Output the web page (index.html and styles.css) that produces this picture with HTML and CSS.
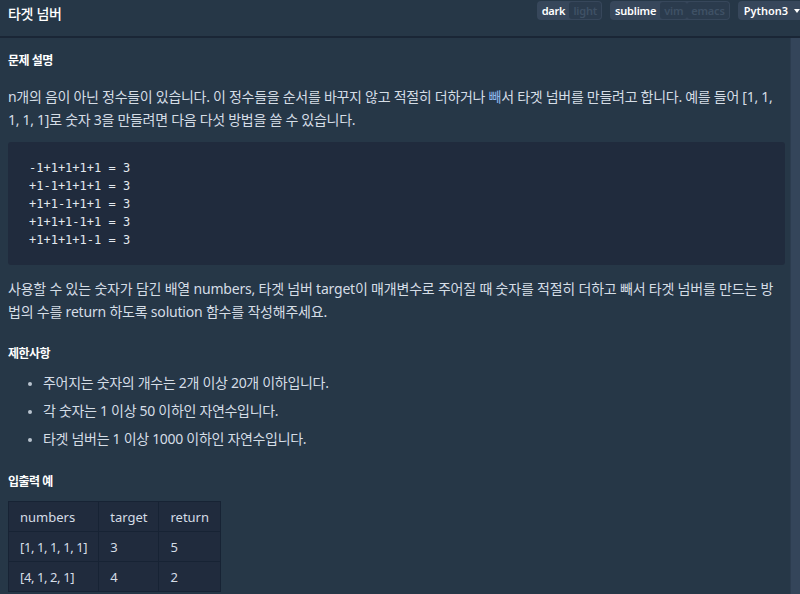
FILE: index.html
```html
<!DOCTYPE html>
<html>
<head>
  <meta charset="utf-8">
  <title>타겟 넘버</title>
  <link rel="stylesheet" href="styles.css">
</head>
<body>
  <div class="topbar">
    <h1>타겟 넘버</h1>
    <div class="tools">
      <div class="toggle">
        <span class="opt on">dark</span><span class="opt">light</span>
      </div>
      <div class="toggle">
        <span class="opt on">sublime</span><span class="opt">vim</span><span class="opt">emacs</span>
      </div>
      <div class="lang">Python3<span class="caret"></span></div>
    </div>
  </div>

  <div class="page">
    <div class="guide">
      <h4>문제 설명</h4>
      <p class="first">n개의 음이 아닌 정수들이 있습니다. 이 정수들을 순서를 바꾸지 않고 적절히 더하거나 <span class="odd">빼</span>서 타겟 넘버를 만들려고 합니다. 예를 들어 [1, 1, 1, 1, 1]로 숫자 3을 만들려면 다음 다섯 방법을 쓸 수 있습니다.</p>
<pre>-1+1+1+1+1 = 3
+1-1+1+1+1 = 3
+1+1-1+1+1 = 3
+1+1+1-1+1 = 3
+1+1+1+1-1 = 3</pre>
      <p class="second">사용할 수 있는 숫자가 담긴 배열 numbers, 타겟 넘버 target이 매개변수로 주어질 때 숫자를 적절히 더하고 빼서 타겟 넘버를 만드는 방법의 수를 return 하도록 solution 함수를 작성해주세요.</p>

      <h5>제한사항</h5>
      <ul>
        <li>주어지는 숫자의 개수는 2개 이상 20개 이하입니다.</li>
        <li>각 숫자는 1 이상 50 이하인 자연수입니다.</li>
        <li>타겟 넘버는 1 이상 1000 이하인 자연수입니다.</li>
      </ul>

      <h5 class="io">입출력 예</h5>
      <table>
        <tr><th>numbers</th><th>target</th><th>return</th></tr>
        <tr><td>[1, 1, 1, 1, 1]</td><td>3</td><td>5</td></tr>
        <tr><td>[4, 1, 2, 1]</td><td>4</td><td>2</td></tr>
      </table>
    </div>
    <div class="scrollbar"></div>
  </div>
</body>
</html>
```

FILE: styles.css
```css
body {
  margin: 0;
  background-color: #263747;
  color: #d5dde6;
  font-family: "Noto Sans", "Noto Sans CJK KR", sans-serif;
  overflow: hidden;
}

.topbar {
  display: flex;
  justify-content: space-between;
  height: 36px;
  border-bottom: 2px solid #1a2636;
}

.topbar h1 {
  margin: 0;
  padding: 3px 0 0 8px;
  font-size: 14px;
  letter-spacing: -0.3px;
  line-height: 22px;
  font-weight: 500;
  color: #ffffff;
}

.tools {
  display: flex;
  align-items: flex-start;
  gap: 8px;
  padding-top: 1px;
  margin-right: -12px;
}

.toggle {
  display: flex;
  background-color: #37475b;
  border-radius: 4px;
  padding: 1px;
}

.opt {
  font-size: 11px;
  font-weight: 600;
  letter-spacing: -0.2px;
  line-height: 17px;
  padding: 0 4px;
  color: #3f5165;
  background-color: #2b3b4d;
  border-radius: 3px;
}

.opt.on {
  color: #ffffff;
  background-color: transparent;
}

.lang {
  display: flex;
  align-items: center;
  white-space: nowrap;
  font-size: 11px;
  font-weight: 600;
  line-height: 19px;
  color: #ffffff;
  background-color: #37475b;
  border-radius: 4px;
  padding: 0 12px 0 6px;
}

.caret {
  border-left: 3.5px solid transparent;
  border-right: 3.5px solid transparent;
  border-top: 4px solid #ffffff;
  margin-left: 6px;
}

.page {
  display: flex;
}

.guide {
  flex: 1;
  padding: 0 5px 0 8px;
}

.scrollbar {
  width: 9px;
  height: 560px;
  background-color: #34455a;
  border-left: 1px solid #2c3c4f;
}

h4, h5 {
  margin: 13px 0 0;
  font-size: 12px;
  letter-spacing: -0.5px;
  font-weight: 700;
  color: #ffffff;
  line-height: 20px;
}

h5 {
  margin-top: 21px;
}

h5.io {
  margin-top: 19px;
}

p {
  margin: 12px 0 0;
  font-size: 14px;
  letter-spacing: -0.28px;
  line-height: 23px;
}

p.first {
  margin-top: 14px;
}

p.second {
  letter-spacing: -0.2px;
}

.odd {
  color: #8fb8ee;
}

pre {
  margin: 11px 0 0;
  padding: 17px 21px 16px;
  background-color: #202b3d;
  border-radius: 3px;
  font-family: "DejaVu Sans Mono", monospace;
  font-size: 12px;
  line-height: 18px;
  color: #e4e9ef;
}

ul {
  margin: 5px 0 0;
  padding-left: 35px;
  font-size: 14px;
  letter-spacing: -0.3px;
}

li {
  line-height: 28px;
}

li::marker {
  color: #b9c3ce;
  font-size: 11px;
}

table {
  margin-top: 9px;
  border-collapse: collapse;
  font-size: 13px;
  background-color: #202b3d;
}

th, td {
  border: 1px solid #172334;
  height: 29px;
  padding: 0 11px;
  text-align: left;
  font-weight: 400;
}

td {
  letter-spacing: -0.4px;
}
```
